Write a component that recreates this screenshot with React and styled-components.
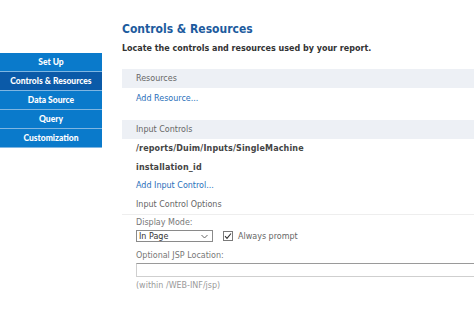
import React from 'react';
import styled, { createGlobalStyle } from 'styled-components';

const GlobalStyle = createGlobalStyle`
  html, body {
    margin: 0;
    padding: 0;
    background: #ffffff;
    overflow: hidden;
  }
  body {
    font-family: "DejaVu Sans", Verdana, sans-serif;
  }
`;

const Page = styled.div`
  display: flex;
  width: 474px;
  height: 328px;
`;

const Sidebar = styled.nav`
  display: flex;
  flex-direction: column;
  width: 102px;
  margin-top: 53px;
  flex-shrink: 0;
`;

const NavItem = styled.div`
  height: 18px;
  display: flex;
  align-items: center;
  justify-content: center;
  background: ${(props) => (props.active ? '#0b5aa8' : '#0a7acb')};
  border-bottom: 1px solid #7fb6e2;
  color: #ffffff;
  font-family: Lato, "Open Sans", sans-serif;
  font-weight: 900;
  font-size: 8.5px;
`;

const Main = styled.main`
  flex: 1;
  margin-left: 20px;
  padding-top: 19px;
  display: flex;
  flex-direction: column;
  min-width: 0;
`;

const Title = styled.h1`
  margin: 0;
  height: 20px;
  line-height: 20px;
  font-family: "DejaVu Sans Condensed", "DejaVu Sans", sans-serif;
  font-stretch: condensed;
  font-size: 12px;
  font-weight: 700;
  color: #1d5b9e;
`;

const Subtitle = styled.p`
  margin: 4px 0 0 0;
  height: 12px;
  line-height: 12px;
  font-size: 8px;
  font-weight: 700;
  color: #333333;
`;

const SectionBar = styled.div`
  margin-top: ${(props) => props.top}px;
  height: 19px;
  display: flex;
  align-items: center;
  padding-left: 14px;
  background: #edf0f5;
  font-size: 8px;
  color: #666666;
`;

const Row = styled.div`
  height: ${(props) => props.h || 19}px;
  display: flex;
  align-items: center;
  padding-left: 14px;
  font-size: 8px;
  color: ${(props) => (props.bold ? '#444444' : '#666666')};
  font-weight: ${(props) => (props.bold ? 700 : 400)};
  letter-spacing: ${(props) => (props.bold ? '0.15px' : '0')};
  border-bottom: ${(props) => (props.divider ? '1px solid #eeeeee' : 'none')};
`;

const Link = styled.a`
  color: #2a6fba;
  text-decoration: none;
  cursor: pointer;
`;

const Label = styled.div`
  padding-left: 14px;
  height: 14px;
  line-height: 14px;
  margin-top: ${(props) => props.top || 0}px;
  font-size: 8px;
  color: ${(props) => (props.muted ? '#9a9a9a' : '#777777')};
`;

const Controls = styled.div`
  display: flex;
  align-items: center;
  gap: 10px;
  padding-left: 14px;
  margin-top: 0;
  height: 12px;
`;

const Select = styled.div`
  box-sizing: border-box;
  width: 77px;
  height: 12px;
  border: 1px solid #8a8a8a;
  display: flex;
  align-items: center;
  justify-content: space-between;
  padding: 0 4px 0 2px;
  font-size: 8px;
  color: #333333;
  background: #ffffff;
`;

const Check = styled.label`
  display: flex;
  align-items: center;
  gap: 5px;
  font-size: 8px;
  color: #666666;
`;

const Box = styled.span`
  box-sizing: border-box;
  width: 10px;
  height: 10px;
  border: 1px solid #7a7a7a;
  display: flex;
  align-items: center;
  justify-content: center;
  background: #ffffff;
`;

const TextInput = styled.div`
  box-sizing: border-box;
  margin-left: 14px;
  height: 14px;
  border: 1px solid #cfcfcf;
  border-top-color: #9a9a9a;
  border-right: none;
  background: #ffffff;
`;

const navItems = ['Set Up', 'Controls & Resources', 'Data Source', 'Query', 'Customization'];

const App = () => {
  return (
    <>
      <GlobalStyle />
      <Page>
        <Sidebar>
          {navItems.map((item) => (
            <NavItem key={item} active={item === 'Controls & Resources'}>
              {item}
            </NavItem>
          ))}
        </Sidebar>
        <Main>
          <Title>Controls &amp; Resources</Title>
          <Subtitle>Locate the controls and resources used by your report.</Subtitle>

          <SectionBar top={14}>Resources</SectionBar>
          <Row h={20}>
            <Link>Add Resource...</Link>
          </Row>

          <SectionBar top={12}>Input Controls</SectionBar>
          <Row bold>/reports/Duim/Inputs/SingleMachine</Row>
          <Row bold h={18}>installation_id</Row>
          <Row>
            <Link>Add Input Control...</Link>
          </Row>
          <Row h={19} divider>Input Control Options</Row>

          <Label top={1}>Display Mode:</Label>
          <Controls>
            <Select>
              <span>In Page</span>
              <svg width="7" height="5" viewBox="0 0 7 5">
                <path d="M0.5 1 L3.5 4 L6.5 1" fill="none" stroke="#666" strokeWidth="1" />
              </svg>
            </Select>
            <Check>
              <Box>
                <svg width="8" height="8" viewBox="0 0 8 8">
                  <path d="M1 4.2 L3 6.3 L7 1.5" fill="none" stroke="#333" strokeWidth="1.1" />
                </svg>
              </Box>
              Always prompt
            </Check>
          </Controls>

          <Label top={7}>Optional JSP Location:</Label>
          <TextInput />
          <Label top={2} muted>(within /WEB-INF/jsp)</Label>
        </Main>
      </Page>
    </>
  );
};

export default App;
